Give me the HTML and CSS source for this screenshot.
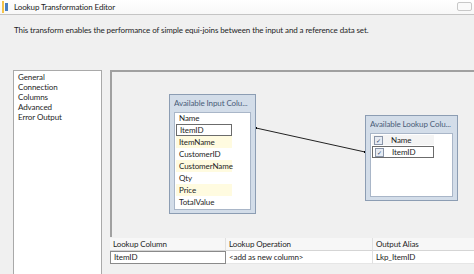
FILE: index.html
```html
<!DOCTYPE html>
<html lang="en">
<head>
    <meta charset="UTF-8">
    <title>Lookup Transformation Editor</title>
    <link rel="stylesheet" href="styles.css">
</head>
<body>
    <div class="titlebar">
        <svg class="app-icon" width="10" height="12" viewBox="0 0 10 12">
            <rect x="1" y="0" width="2" height="12" fill="#f3c34a"/>
            <rect x="4" y="2" width="3" height="8" fill="#4a7fc1"/>
        </svg>
        <span class="title">Lookup Transformation Editor</span>
        <span class="winbtn"></span>
    </div>

    <p class="desc">This transform enables the performance of simple equi-joins between the input and a reference data set.</p>

    <div class="content">
        <ul class="nav">
            <li>General</li>
            <li>Connection</li>
            <li>Columns</li>
            <li>Advanced</li>
            <li>Error Output</li>
        </ul>

        <div class="main">
            <div class="diagram">
                <svg class="link" width="474" height="274">
                    <line x1="256" y1="128" x2="365" y2="152" stroke="#222" stroke-width="1"/>
                    <rect x="255" y="127" width="2" height="2" fill="#000"/>
                    <rect x="364" y="151" width="2" height="2" fill="#000"/>
                </svg>

                <div class="table-box input-box">
                    <div class="box-title">Available Input Colu...</div>
                    <div class="box-list">
                        <div class="row head">Name</div>
                        <div class="row focus">ItemID</div>
                        <div class="row alt">ItemName</div>
                        <div class="row">CustomerID</div>
                        <div class="row alt">CustomerName</div>
                        <div class="row">Qty</div>
                        <div class="row alt">Price</div>
                        <div class="row">TotalValue</div>
                    </div>
                </div>

                <div class="table-box lookup-box">
                    <div class="box-title">Available Lookup Colu...</div>
                    <div class="box-list">
                        <div class="row head"><span class="check">&#10003;</span>Name</div>
                        <div class="row focus"><span class="check">&#10003;</span>ItemID</div>
                    </div>
                </div>
            </div>

            <div class="grid">
                <div class="cell hd c1">Lookup Column</div>
                <div class="cell hd c2">Lookup Operation</div>
                <div class="cell hd c3">Output Alias</div>
                <div class="cell c1 focus">ItemID</div>
                <div class="cell c2">&lt;add as new column&gt;</div>
                <div class="cell c3">Lkp_ItemID</div>
            </div>
        </div>
    </div>
</body>
</html>
```

FILE: styles.css
```css
body {
    margin: 0;
    width: 474px;
    height: 274px;
    overflow: hidden;
    background-color: #f0f0f0;
    font-family: Lato, 'Noto Sans', sans-serif;
    font-size: 8px;
    letter-spacing: -0.1px;
    color: #1e1e1e;
}
.titlebar {
    position: relative;
    height: 14px;
    display: flex;
    align-items: center;
    background: linear-gradient(#ffffff, #f8f8f8);
    border-bottom: 1px solid #c4c4c4;
}
.app-icon {
    margin-left: 1px;
    margin-right: 3px;
}
.title {
    font-size: 8px;
    color: #222;
}
.winbtn {
    position: absolute;
    right: 2px;
    top: 2px;
    width: 13px;
    height: 7px;
    border: 1px solid #c8c8c8;
    border-radius: 2px;
    background: #fafafa;
}
.desc {
    margin: 0;
    padding: 10px 0 0 14px;
    height: 24px;
    line-height: 11px;
}
.content {
    display: flex;
    gap: 8px;
    padding: 21px 0 0 13px;
}
.nav {
    flex-shrink: 0;
    list-style: none;
    margin: 0;
    padding: 1px 4px;
    width: 79px;
    height: 210px;
    background: #fff;
    border: 1px solid #a9a9a9;
    line-height: 10px;
}
.main {
    flex-shrink: 0;
    width: 380px;
    display: flex;
    flex-direction: column;
}
.diagram {
    position: relative;
    height: 165px;
    border-top: 2px solid #a0a0a0;
    border-left: 2px solid #a0a0a0;
    background: #f0f0f0;
}
.link {
    position: absolute;
    left: -112px;
    top: -72px;
}
.table-box {
    position: absolute;
    background: #d3dde9;
    border: 1px solid #8c9db3;
    padding: 0 4px 3px 4px;
    box-sizing: border-box;
}
.input-box {
    left: 57px;
    top: 22px;
    width: 87px;
    height: 120px;
}
.lookup-box {
    left: 253px;
    top: 43px;
    width: 93px;
    height: 86px;
}
.box-title {
    height: 17px;
    line-height: 17px;
    color: #4a5c78;
    white-space: nowrap;
    overflow: hidden;
}
.box-list {
    background: #fff;
    border: 1px solid #a9b6c8;
    height: calc(100% - 20px);
    padding-top: 1px;
}
.row {
    height: 12px;
    line-height: 12px;
    width: 56px;
    padding-left: 3px;
    margin-left: 1px;
    box-sizing: border-box;
    white-space: nowrap;
}
.row.head {
    height: 9px;
    line-height: 9px;
    margin-bottom: 1px;
}
.row.alt {
    background: #fffbe0;
}
.row.focus {
    border: 1px solid #6b6b6b;
    line-height: 10px;
}
.lookup-box .row {
    width: 62px;
    display: flex;
    align-items: center;
    padding-left: 2px;
    background: #fff;
}
.lookup-box .row.head {
    height: 10px;
    background: #f4f4f4;
}
.check {
    display: inline-block;
    width: 7px;
    height: 7px;
    line-height: 7px;
    font-size: 6px;
    text-align: center;
    border: 1px solid #8a95a8;
    background: #e6ebf3;
    color: #2a3e66;
    margin-right: 8px;
}
.grid {
    display: grid;
    grid-template-columns: 116px 147px 120px;
    grid-template-rows: 13px 13px;
    margin-top: 1px;
    background: #fff;
}
.cell {
    padding-left: 3px;
    line-height: 12px;
    white-space: nowrap;
    border-right: 1px solid #e0e0e0;
    border-bottom: 1px solid #e6e6e6;
}
.cell.hd {
    background: #f7f7f7;
    border-bottom: 1px solid #d5d5d5;
}
.cell.focus {
    border: 1px solid #8a8a8a;
    line-height: 10px;
}
```
